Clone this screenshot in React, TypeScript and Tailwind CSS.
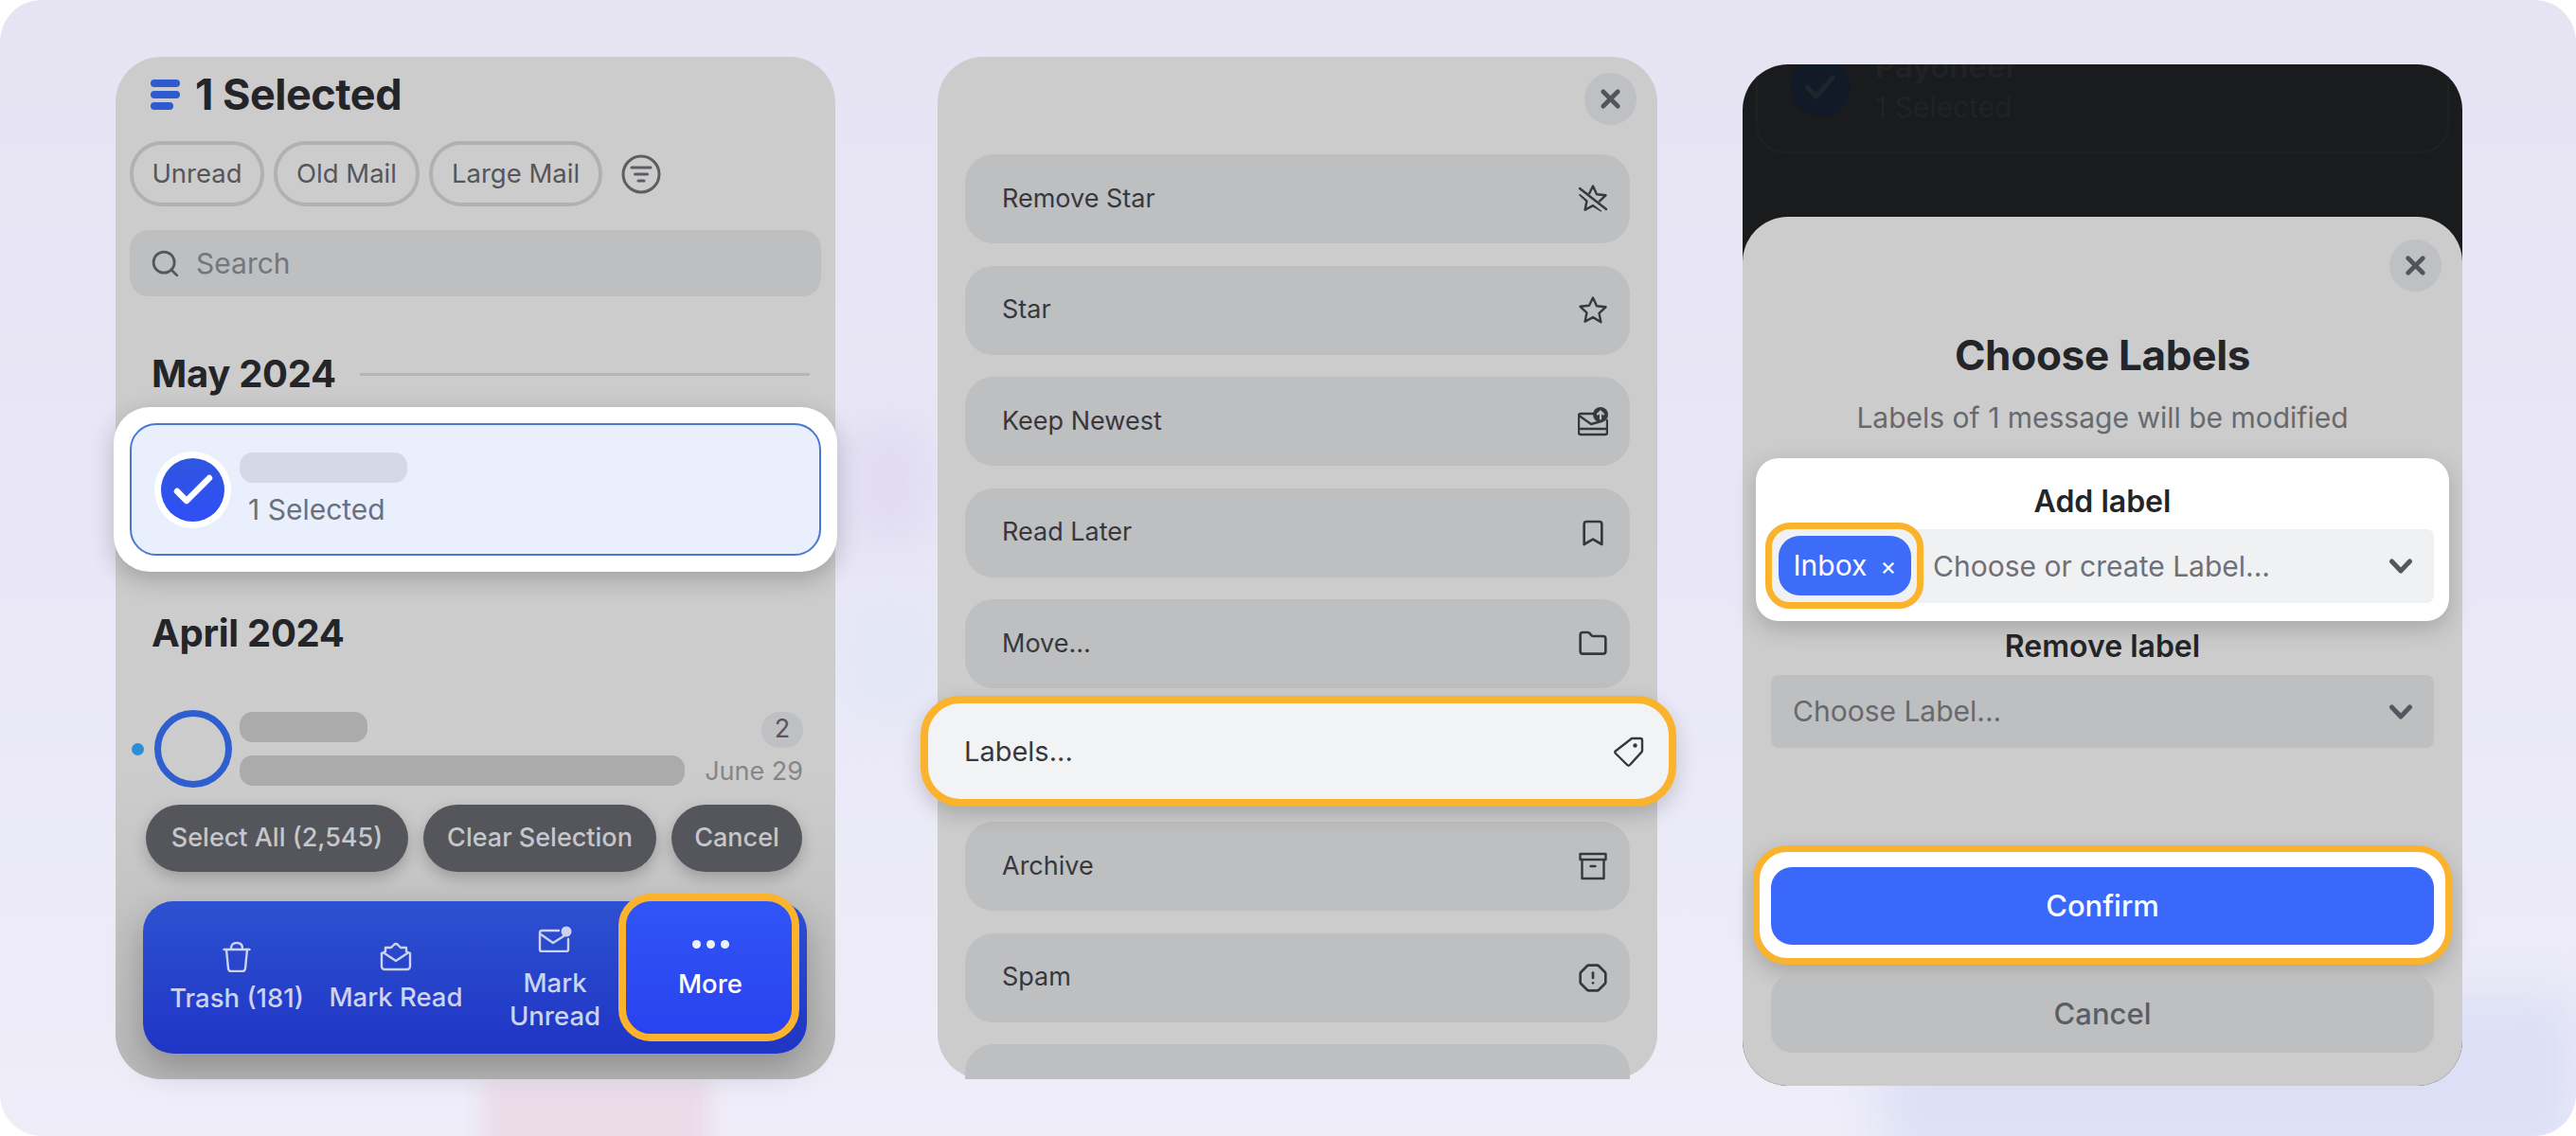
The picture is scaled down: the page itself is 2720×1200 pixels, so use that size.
import { Bookmark, Folder, OctagonAlert, Search, X } from "lucide-react";
import type { ReactNode } from "react";

const inter = "font-['Inter','Noto_Sans',sans-serif]";

const starPath = "M16 2.500l4 8.700 9.500 1.100-7 6.500 1.900 9.400L16 23.100l-8.400 4.600 1.900-9.400-7-6.500 9.500-1.100z";

function ChevronDown() {
  return (
    <svg viewBox="0 0 26 20" className="h-[20px] w-[26px] shrink-0 text-[#55565e]" fill="none" stroke="currentColor" strokeWidth="5" strokeLinecap="round" strokeLinejoin="round">
      <path d="M3.500 5 13 15l9.500-10" />
    </svg>
  );
}

function CloseButton() {
  return (
    <div className="flex h-[55px] w-[55px] items-center justify-center rounded-full bg-[#bfc0c3]">
      <X className="h-[31px] w-[31px] text-[#53545c]" strokeWidth={3.6} />
    </div>
  );
}

function StarOffIcon() {
  return (
    <svg viewBox="0 0 32 32" className="h-[32px] w-[32px]" fill="none" stroke="currentColor" strokeWidth="2.400" strokeLinecap="round" strokeLinejoin="round">
      <path d={starPath} />
      <path d="M2 7l27 21" stroke="#bebfc1" strokeWidth="6" />
      <path d="M2 5l28 22" />
    </svg>
  );
}

function StarIcon() {
  return (
    <svg viewBox="0 0 32 32" className="h-[32px] w-[32px]" fill="none" stroke="currentColor" strokeWidth="2.400" strokeLinecap="round" strokeLinejoin="round">
      <path d={starPath} />
    </svg>
  );
}

function KeepNewestIcon() {
  return (
    <svg viewBox="0 0 32 32" className="h-[32px] w-[32px]" fill="none" stroke="currentColor" strokeWidth="2.400" strokeLinecap="round" strokeLinejoin="round">
      <path d="M17 8H3a2 2 0 0 0-2 2v18a2 2 0 0 0 2 2h26a2 2 0 0 0 2-2V15" />
      <path d="M2 10.500l12 8.500 11-3" />
      <path d="M1.500 24h29" />
      <circle cx="24" cy="9" r="8" fill="currentColor" stroke="none" />
      <path d="M24 13.500V6M21 8.500 24 5.500l3 3" stroke="#bebfc1" strokeWidth="2.200" />
    </svg>
  );
}

function TagIcon() {
  return (
    <svg viewBox="0 0 32 32" className="h-[32px] w-[32px]" fill="none" stroke="currentColor" strokeWidth="2.400" strokeLinecap="round" strokeLinejoin="round">
      <path d="M19 2h9a2 2 0 0 1 2 2v11a2 2 0 0 1-.6 1.400L17 30a2 2 0 0 1-2.800 0L2 18a2 2 0 0 1 0-2.800z" />
      <circle cx="22.500" cy="9.500" r="2.200" fill="currentColor" stroke="none" />
    </svg>
  );
}

function ArchiveIcon() {
  return (
    <svg viewBox="0 0 32 32" className="h-[32px] w-[32px]" fill="none" stroke="currentColor" strokeWidth="2.400" strokeLinecap="round" strokeLinejoin="round">
      <path d="M2.500 3h27v6h-27z" />
      <path d="M4.500 9v20h23V9" />
      <path d="M13.500 16h5" />
    </svg>
  );
}

function ActionRow({ label, icon }: { label: string; icon: ReactNode }) {
  return (
    <div className="flex h-[94px] items-center justify-between rounded-[30px] bg-[#bebfc1] pr-[23px] pl-[39px] text-[#37383d]">
      <span className="text-[27px]">{label}</span>
      <span className="flex w-[32px] justify-center">{icon}</span>
    </div>
  );
}

function Chip({ label, width }: { label: string; width: string }) {
  return (
    <div className={`flex h-[69px] items-center justify-center rounded-[34px] border-[4px] border-[#b0b1b2] text-[27.500px] text-[#55565c] ${width}`}>
      {label}
    </div>
  );
}

function DarkPill({ label, width }: { label: string; width: string }) {
  return (
    <div className={`flex h-[71px] items-center justify-center rounded-[36px] bg-[#55555c] text-[27px] font-medium text-[#c6c7cc] shadow-[0_6px_16px_rgba(0,0,0,0.22)] ${width}`}>
      {label}
    </div>
  );
}

function ToolbarItem({ icon, children }: { icon: ReactNode; children: ReactNode }) {
  return (
    <div className="flex w-[168px] flex-col items-center gap-[10px] text-center text-[27.500px] leading-[35px] font-medium text-[#cdd3ee]">
      {icon}
      <span>{children}</span>
    </div>
  );
}

function ListPanel() {
  return (
    <section className="flex h-[1080px] w-[760px] flex-col rounded-[48px] bg-[linear-gradient(180deg,#cccccc_70%,#b9b9b9_100%)]">
      <div className="mt-[19px] ml-[37px] flex h-[42px] items-center gap-[16px]">
        <svg viewBox="0 0 31 32" className="h-[32px] w-[31px]">
          <rect x="0" y="0" width="31" height="8" rx="4" fill="#2f5bd0" />
          <rect x="0" y="12" width="31" height="8" rx="4" fill="#2f5bd0" />
          <rect x="0" y="24" width="24" height="8" rx="4" fill="#2f5bd0" />
        </svg>
        <h1 className="text-[45px] font-bold tracking-[-0.5px] text-[#242528]">1 Selected</h1>
      </div>

      <div className="mt-[28px] ml-[15px] flex items-center gap-[10px]">
        <Chip label="Unread" width="w-[142px]" />
        <Chip label="Old Mail" width="w-[154px]" />
        <Chip label="Large Mail" width="w-[183px]" />
        <svg viewBox="0 0 42 42" className="ml-[10px] h-[42px] w-[42px] text-[#5d5e63]" fill="none" stroke="currentColor" strokeWidth="3" strokeLinecap="round">
          <circle cx="21" cy="21" r="19" />
          <path d="M11 14h20M14.500 21h13M18 28h6" />
        </svg>
      </div>

      <div className="mx-[15px] mt-[25px] flex h-[70px] items-center gap-[16px] rounded-[20px] bg-[#bebfc1] pl-[21px] text-[#75767b]">
        <Search className="h-[33px] w-[33px] text-[#55565c]" strokeWidth={2} />
        <span className="text-[30px]">Search</span>
      </div>

      <div className="mt-[57px] ml-[38px] flex h-[50px] items-center gap-[25px]">
        <h2 className="text-[40px] font-bold tracking-[-0.3px] text-[#242528]">May 2024</h2>
        <div className="h-[3px] w-[475px] bg-[#b5b5b5]" />
      </div>

      <div className="-mx-[2px] mt-[10px] h-[174px] rounded-[38px] bg-white p-[17px] shadow-[0_8px_26px_rgba(0,0,0,0.22)]">
        <div className="flex h-[140px] items-center rounded-[28px] border-[2px] border-[#4a78d0] bg-[#e9effd] pl-[24px]">
          <div className="flex h-[81px] w-[81px] shrink-0 items-center justify-center rounded-full bg-white">
            <div className="flex h-[67px] w-[67px] items-center justify-center rounded-full bg-[linear-gradient(180deg,#2f56e0,#2f4ff5)]">
              <svg viewBox="0 0 42 34" className="h-[34px] w-[42px]" fill="none" stroke="#fff" strokeWidth="6.500" strokeLinecap="round" strokeLinejoin="round">
                <path d="M4 19l10 10L38 5" />
              </svg>
            </div>
          </div>
          <div className="ml-[9px] flex flex-col">
            <div className="h-[32px] w-[177px] rounded-[14px] bg-[#d3d9e6]" />
            <span className="mt-[10px] ml-[9px] text-[30px] leading-[36px] text-[#6c7078]">1 Selected</span>
          </div>
        </div>
      </div>

      <h2 className="mt-[40px] ml-[38px] flex h-[50px] items-center text-[40px] font-bold tracking-[-0.3px] text-[#242528]">April 2024</h2>

      <div className="relative mt-[56px] ml-[41px] flex h-[82px] w-[685px] items-center">
        <div className="absolute top-[35px] -left-[24px] h-[13px] w-[13px] rounded-full bg-[#2a8fd8]" />
        <div className="h-[82px] w-[82px] shrink-0 rounded-full border-[7px] border-[#2f5fcf]" />
        <div className="ml-[8px] flex w-[470px] flex-col gap-[14px]">
          <div className="h-[32px] w-[135px] rounded-[14px] bg-[#ababab]" />
          <div className="h-[32px] w-[470px] rounded-[14px] bg-[#ababab]" />
        </div>
        <div className="ml-auto flex flex-col items-end gap-[9px]">
          <div className="flex h-[38px] w-[44px] items-center justify-center rounded-full bg-[#bfc0c3] text-[27px] text-[#55565c]">2</div>
          <span className="text-[27px] leading-[32px] text-[#85868a]">June 29</span>
        </div>
      </div>

      <div className="mt-[18px] ml-[32px] flex gap-[16px]">
        <DarkPill label="Select All (2,545)" width="w-[277px]" />
        <DarkPill label="Clear Selection" width="w-[246px]" />
        <DarkPill label="Cancel" width="w-[138px]" />
      </div>

      <div className="mt-[31px] ml-[29px] flex h-[161px] w-[701px] items-start rounded-[32px] bg-[linear-gradient(180deg,#2d51d0,#1f35c5)] pl-[15px] shadow-[0_14px_36px_rgba(0,0,0,0.25)]">
        <div className="flex h-full items-center">
          <ToolbarItem
            icon={
              <svg viewBox="0 0 30 33" className="h-[33px] w-[30px]" fill="none" stroke="currentColor" strokeWidth="2.400" strokeLinecap="round" strokeLinejoin="round">
                <path d="M1.500 9h27" />
                <path d="M9 8c0-4 2-6 6-6s6 2 6 6" />
                <path d="M4 9l2 20a3 3 0 0 0 3 3h12a3 3 0 0 0 3-3l2-20" />
              </svg>
            }
          >
            Trash (181)
          </ToolbarItem>
          <ToolbarItem
            icon={
              <svg viewBox="0 0 34 32" className="h-[32px] w-[34px]" fill="none" stroke="currentColor" strokeWidth="2.400" strokeLinecap="round" strokeLinejoin="round">
                <path d="M2 13v14a3 3 0 0 0 3 3h24a3 3 0 0 0 3-3V13" />
                <path d="M2 13l4-2V7h6l3-3a3 3 0 0 1 4 0l3 3h6v4l4 2" />
                <path d="M5 13l12 8 12-8" />
              </svg>
            }
          >
            Mark Read
          </ToolbarItem>
          <ToolbarItem
            icon={
              <svg viewBox="0 0 36 28" className="mt-[4px] mb-[5px] h-[28px] w-[36px]" fill="none" stroke="currentColor" strokeWidth="2.400" strokeLinecap="round" strokeLinejoin="round">
                <path d="M22 5H4a2 2 0 0 0-2 2v18a2 2 0 0 0 2 2h26a2 2 0 0 0 2-2V14" />
                <path d="M3 9l13 9 11-7" />
                <circle cx="30" cy="6" r="5.500" fill="currentColor" stroke="none" />
              </svg>
            }
          >
            Mark
            <br />
            Unread
          </ToolbarItem>
        </div>
        <div className="relative -mt-[8px] -ml-[17px] flex h-[156px] w-[191px] shrink-0 flex-col items-center rounded-[34px] border-[8px] border-[#fbb32e] bg-[linear-gradient(180deg,#3055f5,#2a42f0)] pt-[41px] pl-[3px] text-white">
          <div className="flex gap-[6px]">
            <span className="h-[9px] w-[9px] rounded-full bg-[#eef0fb]" />
            <span className="h-[9px] w-[9px] rounded-full bg-[#eef0fb]" />
            <span className="h-[9px] w-[9px] rounded-full bg-[#eef0fb]" />
          </div>
          <span className="mt-[20px] text-[27.500px] leading-[35px] font-medium">More</span>
        </div>
      </div>
    </section>
  );
}

function ActionsPanel() {
  return (
    <section className="ml-[108px] flex h-[1080px] w-[760px] flex-col rounded-[48px] bg-[#cccccc]">
      <div className="mt-[17px] mr-[22px] flex justify-end">
        <CloseButton />
      </div>
      <div className="mx-[29px] mt-[31px] flex flex-col gap-[23.500px]">
        <ActionRow label="Remove Star" icon={<StarOffIcon />} />
        <ActionRow label="Star" icon={<StarIcon />} />
        <ActionRow label="Keep Newest" icon={<KeepNewestIcon />} />
        <ActionRow label="Read Later" icon={<Bookmark className="h-[34px] w-[34px]" strokeWidth={2} />} />
        <ActionRow label="Move..." icon={<Folder className="h-[34px] w-[34px]" strokeWidth={2} />} />
      </div>
      <div className="relative z-10 -mr-[20px] -ml-[18px] mt-[8px] flex h-[117px] items-center justify-between rounded-[42px] border-[8px] border-[#fbb32e] bg-[#f2f3f5] pr-[26px] pl-[38px] text-[#37383d] shadow-[0_8px_22px_rgba(0,0,0,0.18)]">
        <span className="text-[29px]">Labels...</span>
        <TagIcon />
      </div>
      <div className="mx-[29px] mt-[16px] flex flex-col gap-[23.500px]">
        <ActionRow label="Archive" icon={<ArchiveIcon />} />
        <ActionRow label="Spam" icon={<OctagonAlert className="h-[34px] w-[34px]" strokeWidth={2} />} />
        <div className="h-[37px] rounded-t-[30px] bg-[#bebfc1]" />
      </div>
    </section>
  );
}

function LabelsPanel() {
  return (
    <section className="mt-[8px] ml-[90px] flex h-[1079px] w-[760px] flex-col overflow-visible rounded-[48px] bg-[#1a1b1d]">
      {/* dimmed list behind the sheet */}
      <div className="relative h-[161px] overflow-hidden rounded-t-[48px]">
        <div className="absolute -top-[30px] right-[14px] left-[14px] h-[124px] rounded-[30px] border-[2px] border-[#1f2022]" />
        <div className="absolute -top-[8px] left-[50px] flex h-[64px] w-[64px] items-center justify-center rounded-full bg-[#121a28]">
          <svg viewBox="0 0 40 40" className="h-[40px] w-[40px]" fill="none" stroke="#20242b" strokeWidth="5.500" strokeLinecap="round" strokeLinejoin="round">
            <path d="M7 21l9 9L33 10" />
          </svg>
        </div>
        <span className="absolute -top-[18px] left-[140px] text-[33px] leading-[40px] font-semibold text-[#212224]">Payoneer</span>
        <span className="absolute top-[27px] left-[140px] text-[30px] leading-[36px] text-[#212224]">1 Selected</span>
      </div>

      <div className="relative flex flex-1 flex-col rounded-[48px] bg-[#cccccc]">
        <div className="mt-[24px] mr-[22px] flex justify-end">
          <CloseButton />
        </div>
        <h2 className="mt-[41px] text-center text-[44px] leading-[52px] font-bold tracking-[-0.3px] text-[#242528]">Choose Labels</h2>
        <p className="mt-[20px] text-center text-[30px] leading-[40px] text-[#68696f]">Labels of 1 message will be modified</p>

        <div className="relative z-10 mx-[14px] mt-[23px] h-[172px] rounded-[24px] bg-white px-[16px] pt-[26px] shadow-[0_8px_24px_rgba(0,0,0,0.18)]">
          <h3 className="text-center text-[32px] leading-[40px] font-semibold text-[#242528]">Add label</h3>
          <div className="relative mt-[9px] flex h-[78px] items-center rounded-[8px] bg-[#f0f1f3] pr-[22px] pl-[171px]">
            <span className="flex-1 text-[30px] text-[#6f7077]">Choose or create Label...</span>
            <ChevronDown />
            <div className="absolute -top-[7px] -left-[6px] flex h-[91px] w-[167px] items-center justify-center rounded-[26px] border-[7px] border-[#fbb32e] bg-[#f0f1f3]">
              <div className="flex h-[63px] w-[140px] items-center gap-[14px] rounded-[22px] bg-[#3c6cf8] pl-[16px] text-white">
                <span className="text-[30px]">Inbox</span>
                <span className="text-[26px]">×</span>
              </div>
            </div>
          </div>
        </div>

        <h3 className="mt-[7px] text-center text-[32px] leading-[40px] font-semibold text-[#242528]">Remove label</h3>
        <div className="mx-[30px] mt-[10px] flex h-[77px] items-center justify-between rounded-[8px] bg-[#bebfc1] pr-[22px] pl-[23px]">
          <span className="text-[30px] text-[#68696f]">Choose Label...</span>
          <ChevronDown />
        </div>

        <div className="mx-[11px] mt-[103px] h-[126px] rounded-[36px] border-[7px] border-[#fbb32e] bg-white px-[12px] pt-[16px] shadow-[0_8px_22px_rgba(0,0,0,0.18)]">
          <div className="flex h-[82px] items-center justify-center rounded-[22px] bg-[#3a68fb] text-[31px] font-medium text-white">Confirm</div>
        </div>

        <div className="mx-[30px] mt-[11px] flex h-[82px] items-center justify-center rounded-[22px] bg-[#bebfc1] text-[31px] font-medium text-[#5c5d63]">Cancel</div>
      </div>
    </section>
  );
}

export default function App() {
  return (
    <div className={`h-[1200px] w-[2720px] bg-white ${inter}`}>
      <div className="relative h-full w-full overflow-hidden rounded-[44px] bg-[linear-gradient(180deg,#e6e3f3_0%,#e9e7f7_45%,#eeedf8_100%)]">
        {/* soft colour blobs in the backdrop */}
        <div className="absolute top-[450px] left-[900px] h-[120px] w-[80px] bg-[#e0daf1] blur-[24px]" />
        <div className="absolute top-[640px] left-[900px] h-[110px] w-[80px] bg-[#e1e6f5] blur-[24px]" />
        <div className="absolute -bottom-[20px] left-[510px] h-[80px] w-[240px] bg-[#ebdcea] blur-[10px]" />
        <div className="absolute right-0 -bottom-[20px] h-[170px] w-[730px] bg-[#dcdff6] blur-[24px]" />
        <div className="relative flex h-full items-start pt-[60px] pl-[122px]">
          <ListPanel />
          <ActionsPanel />
          <LabelsPanel />
        </div>
      </div>
    </div>
  );
}
